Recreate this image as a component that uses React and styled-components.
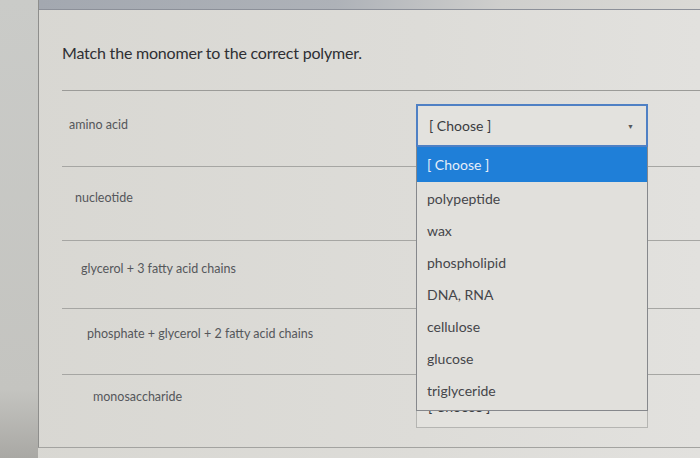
import React from 'react'
import styled, { createGlobalStyle } from 'styled-components'

const monomers = [
    { name: 'amino acid', height: 76, pad: 26 },
    { name: 'nucleotide', height: 74, pad: 23 },
    { name: 'glycerol + 3 fatty acid chains', height: 68, pad: 20 },
    { name: 'phosphate + glycerol + 2 fatty acid chains', height: 66, pad: 17 },
    { name: 'monosaccharide', height: 72, pad: 14 },
]

const polymers = [
    'polypeptide',
    'wax',
    'phospholipid',
    'DNA, RNA',
    'cellulose',
    'glucose',
    'triglyceride',
]

export default function App(){
    const last = monomers.length-1
    return(
        <>
            <GlobalStyle/>
            <Screen>
                <SideStrip/>
                <Card>
                    <HeaderBand/>
                    <Body>
                        <Title>Match the monomer to the correct polymer.</Title>
                        <Rows>
                            {monomers.map((m,i)=>{
                                // rows 2-4 sit under the open list, so their select text is hidden
                                const covered = i>0 && i<last
                                return(
                                    <Row key={m.name} h={m.height} last={i===last}>
                                        <Label pad={m.pad} indent={i*6}>{m.name}</Label>
                                        <SelectWrap top={i===last?10:13}>
                                            <Select open={i===0}>
                                                <SelectText covered={covered}>[ Choose ]</SelectText>
                                                <Arrow>▼</Arrow>
                                            </Select>
                                            {i===0?
                                                <Menu>
                                                    <Option active>[ Choose ]</Option>
                                                    {polymers.map(p=><Option key={p}>{p}</Option>)}
                                                </Menu>
                                            :null}
                                        </SelectWrap>
                                    </Row>
                                )
                            })}
                        </Rows>
                    </Body>
                </Card>
            </Screen>
        </>
    )
}

const GlobalStyle = createGlobalStyle`
    html, body {
        margin: 0;
        padding: 0;
        background: #d9d8d4;
        font-family: 'Lato', 'Liberation Sans', sans-serif;
    }
`

const Screen = styled.div`
    display: grid;
    grid-template-columns: 38px 1fr;
    width: 700px;
    height: 458px;
    overflow: hidden;
    background: linear-gradient(90deg, #d8d7d2 0%, #dddcd8 60%, #e2e1de 100%);
`

const SideStrip = styled.div`
    background: linear-gradient(180deg, #cacbc8 0%, #c4c4c0 85%, #a9a8a4 100%);
`

const Card = styled.div`
    display: flex;
    flex-direction: column;
    height: 448px;
    box-sizing: border-box;
    overflow: hidden;
    border-left: 1px solid #8e8e8c;
    border-bottom: 1px solid #a3a3a0;
`

const HeaderBand = styled.div`
    flex-shrink: 0;
    height: 9px;
    background: linear-gradient(90deg, #a3a8b0 0%, #aeb2b8 45%, #cfcfcd 70%, #dbdad6 100%);
    border-bottom: 1px solid #8c9099;
`

const Body = styled.div`
    flex-shrink: 0;
    padding-left: 23px;
`

const Title = styled.h2`
    margin: 33px 0 0 0;
    height: 47px;
    font-size: 16px;
    font-weight: 400;
    color: #2e2f33;
    letter-spacing: -0.2px;
`

const Rows = styled.div`
    border-top: 1px solid #9b9b98;
`

const Row = styled.div`
    display: grid;
    grid-template-columns: 354px 232px 1fr;
    height: ${p=>p.h}px;
    border-bottom: ${p=>p.last?'none':'1px solid #a6a6a3'};
    box-sizing: border-box;
`

const Label = styled.div`
    padding: ${p=>p.pad}px 0 0 ${p=>7+p.indent}px;
    font-size: 12.5px;
    color: #55575b;
`

const SelectWrap = styled.div`
    position: relative;
    padding-top: ${p=>p.top}px;
`

const Select = styled.div`
    display: flex;
    align-items: center;
    justify-content: space-between;
    height: 43px;
    box-sizing: border-box;
    padding: 0 12px 0 11px;
    background: #e3e2de;
    border: ${p=>p.open?'2px solid #4f80c4':'1px solid #b5b5b2'};
    font-size: 14px;
    color: #3a3b3f;
`

const SelectText = styled.span`
    visibility: ${p=>p.covered?'hidden':'visible'};
`

const Arrow = styled.span`
    font-size: 7px;
    color: #55575b;
`

const Menu = styled.div`
    position: absolute;
    top: 56px;
    left: 0;
    right: 0;
    z-index: 2;
    background: #e1e0dc;
    border: 1px solid #86888c;
    border-top: none;
    padding-bottom: 4px;
`

const Option = styled.div`
    display: flex;
    align-items: center;
    height: ${p=>p.active?'35px':'32px'};
    padding-left: 10px;
    font-size: 14px;
    background: ${p=>p.active?'#1f7fd8':'transparent'};
    color: ${p=>p.active?'#e6eef8':'#45464a'};
`
